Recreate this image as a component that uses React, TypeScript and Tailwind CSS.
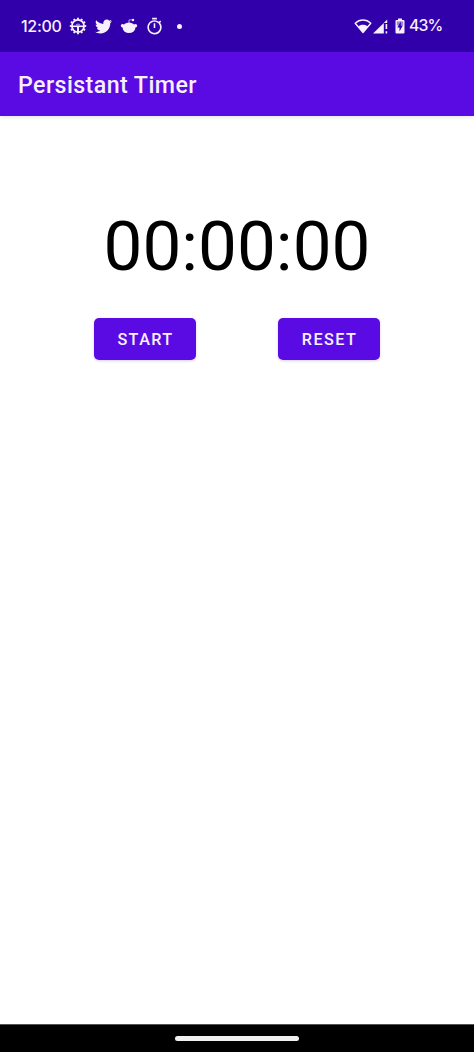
import React from 'react';
import { FaTwitter } from 'react-icons/fa';
import { MdOutlineTimer } from 'react-icons/md';

const GEAR_TEETH = [0, 30, 60, 90, 120, 150, 180, 210, 240, 270, 300, 330];

const GearIcon: React.FC = () => (
  <svg viewBox="0 0 18 18" className="w-[18px] h-[18px]" fill="none" stroke="currentColor">
    <circle cx="9" cy="9" r="6.1" strokeWidth="1.8" />
    {GEAR_TEETH.map((angle) => (
      <path key={angle} d="M9 2.5V.8" strokeWidth="1.9" transform={`rotate(${angle} 9 9)`} />
    ))}
    <path d="M3 9.3h12" strokeWidth="1.6" />
    <path d="M9 9v6" strokeWidth="2" />
    <path d="M6.6 8.6a2.4 2 0 0 1 4.8 0z" fill="currentColor" stroke="none" opacity="0.5" />
  </svg>
);

const RedditIcon: React.FC = () => (
  <svg viewBox="0 0 18 16" className="w-[18px] h-4" fill="currentColor">
    <ellipse cx="9" cy="9.8" rx="6.4" ry="5.2" />
    <circle cx="2.6" cy="7.8" r="1.8" />
    <circle cx="15.4" cy="7.8" r="1.8" />
    <path d="M9 6V1.9h3.4" fill="none" stroke="currentColor" strokeWidth="0.8" opacity="0.8" />
    <circle cx="13" cy="2" r="1.2" />
  </svg>
);

const WifiIcon: React.FC = () => (
  <svg viewBox="0 0 18 15" className="w-[18px] h-[15px]">
    <path d="M1.2 4.2C5.8-.1 12.2-.1 16.8 4.2L9 13.5z" fill="none" stroke="currentColor" strokeWidth="1.4" strokeLinejoin="round" />
    <path d="M4 7.6c2.9-2.6 7.1-2.6 10 0L9 13.4z" fill="currentColor" />
  </svg>
);

const SignalIcon: React.FC = () => (
  <svg viewBox="0 0 15 15" className="w-[15px] h-[15px]" fill="currentColor">
    <path d="M0 14.5 10.8 4v10.5z" />
    <path d="M10.8 3.9 14.2.5v3.4zM12.6 5h1.6v5h-1.6zM12.6 12.2h1.6v2.3h-1.6z" />
  </svg>
);

const BatteryIcon: React.FC = () => (
  <svg viewBox="0 0 10 16" className="w-[10px] h-4">
    <path
      d="M3 .4h4v1.5h1.5q1 0 1 1v11.6q0 1-1 1h-7q-1 0-1-1V2.9q0-1 1-1H3z"
      fill="currentColor"
    />
    <path d="M1.8 3.4h6.4v4H1.8z" fill="#3100aa" opacity="0.45" />
    <path d="M5.8 3.5 2.3 9.4h2.2v4.2l3.3-6H5.8z" fill="#3100aa" />
  </svg>
);

const StatusBar: React.FC = () => (
  <div className="h-[52px] shrink-0 bg-[#3100aa] flex items-center pl-[21px] pr-8 text-[#f7f0ff] font-['Inter'] text-[16px] font-medium">
    <span className="w-12 tracking-[-0.3px]">12:00</span>
    <GearIcon />
    <FaTwitter className="w-[17px] h-[17px] ml-2" />
    <span className="ml-2">
      <RedditIcon />
    </span>
    <MdOutlineTimer className="w-[19px] h-[19px] ml-[7px]" />
    <span className="w-[5px] h-[5px] rounded-full bg-current ml-[13px]" />
    <span className="ml-auto">
      <WifiIcon />
    </span>
    <span className="ml-px">
      <SignalIcon />
    </span>
    <span className="ml-[7px]">
      <BatteryIcon />
    </span>
    <span className="ml-1 w-[33px] whitespace-nowrap text-[15.8px] leading-6 tracking-[-0.9px]">43%</span>
  </div>
);

const TimerButton: React.FC<{ label: string }> = ({ label }) => (
  <button className="w-[102px] h-[42px] rounded-[5px] bg-[#5a0be3] pt-[2px] pl-px text-[#f7f0ff] text-[16.2px] font-medium tracking-[1.4px] shadow-[0_1px_3px_rgba(70,0,180,0.2)]">
    {label}
  </button>
);

const App: React.FC = () => {
  return (
    <div className="h-screen flex flex-col bg-white font-['Roboto',sans-serif] overflow-hidden">
      <StatusBar />
      <header className="h-16 shrink-0 bg-[#5a0be3] flex items-center pl-[18px] pt-[2px] shadow-[0_1px_4px_rgba(0,0,0,0.12)]">
        <h1 className="text-[23.2px] font-medium text-[#f7f0ff] tracking-[0.43px]">Persistant Timer</h1>
      </header>

      <main className="flex-1 flex flex-col items-center pt-[90px]">
        <div className="text-[69.2px] leading-[81px] text-black">00:00:00</div>
        <div className="flex gap-[82px] mt-[31px]">
          <TimerButton label="START" />
          <TimerButton label="RESET" />
        </div>
      </main>

      <footer className="h-7 shrink-0 bg-black border-t border-[#555] flex items-center justify-center">
        <div className="w-[124px] h-[5px] rounded-full bg-[#f0f0f0]" />
      </footer>
    </div>
  );
};

export default App;
